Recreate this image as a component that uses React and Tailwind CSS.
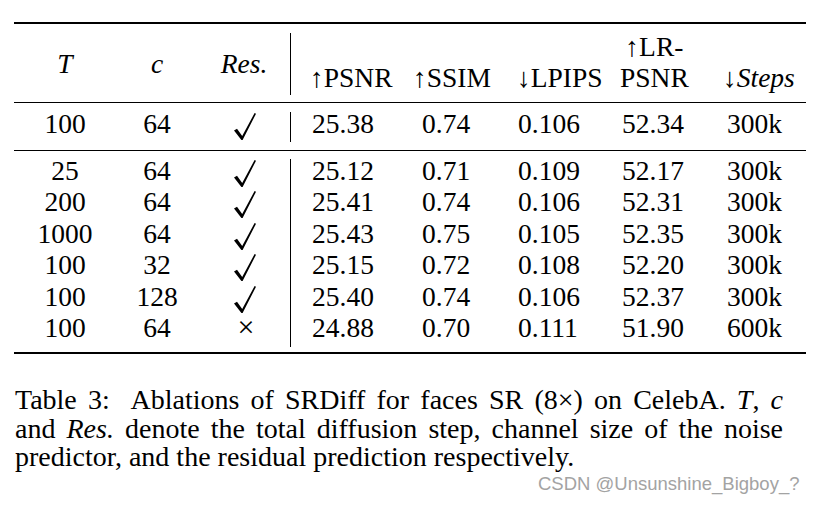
import React from 'react';

const leftCols = ['w-[102px]', 'w-[82px]', 'w-[92px]'];
const rightCols = ['w-[119px] pl-[21px]', 'w-[102px] pl-[12px]', 'w-[103px] pl-[6px]', 'w-[105px] pl-[7px]', 'w-[86px] pl-[7px]'];

const ablations = [
  ['25', '64', true, '25.12', '0.71', '0.109', '52.17', '300k'],
  ['200', '64', true, '25.41', '0.74', '0.106', '52.31', '300k'],
  ['1000', '64', true, '25.43', '0.75', '0.105', '52.35', '300k'],
  ['100', '32', true, '25.15', '0.72', '0.108', '52.20', '300k'],
  ['100', '128', true, '25.40', '0.74', '0.106', '52.37', '300k'],
  ['100', '64', false, '24.88', '0.70', '0.111', '51.90', '600k'],
];

// \surd-style check mark, shifted down so it hangs below the baseline like the TeX glyph
const Check = () => (
  <svg width="22" height="27" viewBox="0 0 22 27" className="inline-block align-baseline relative top-[7px] -mt-[8px] ml-[2px]">
    <polygon points="0,17.5 3,15.8 8.2,23 20.6,0 22,0.8 8.6,27 7.4,27" fill="#000" />
  </svg>
);

const Res = ({ ok }) => (ok ? <Check /> : <span className="text-[30px] leading-none pl-[4px]">×</span>);

const LeftRow = ({ r }) => (
  <div className="flex">
    <div className={`${leftCols[0]} text-center`}>{r[0]}</div>
    <div className={`${leftCols[1]} text-center`}>{r[1]}</div>
    <div className={`${leftCols[2]} text-center`}><Res ok={r[2]} /></div>
  </div>
);

const RightRow = ({ r }) => (
  <div className="flex">
    {r.slice(3).map((v, i) => (
      <div key={i} className={rightCols[i]}>{v}</div>
    ))}
  </div>
);

export default function App() {
  const base = ['100', '64', true, '25.38', '0.74', '0.106', '52.34', '300k'];
  return (
    <div className="w-[817px] h-[505px] bg-white relative overflow-hidden text-black [font-family:'Liberation_Serif','Times_New_Roman',serif]">
      <div className="pt-[22px] pl-[14px]">
        <div className="w-[792px] text-[27.5px]">
          <div className="h-[2px] bg-black" />

          {/* header */}
          <div className="flex h-[78px] leading-[31px]">
            <div className="flex self-center">
              <div className={`${leftCols[0]} text-center italic`}>T</div>
              <div className={`${leftCols[1]} text-center italic`}>c</div>
              <div className={`${leftCols[2]} text-center italic`}>Res.</div>
            </div>
            <div className="w-px bg-black mt-[9px] mb-[7px]" />
            <div className="flex items-end self-end pb-[9px]">
              <div className="w-[119px] pl-[19px]">↑PSNR</div>
              <div className="w-[102px] pl-[3px]">↑SSIM</div>
              <div className="w-[103px] pl-[5px]">↓LPIPS</div>
              <div className="w-[105px] pl-[5px]">
                <div className="inline-flex flex-col items-center">
                  <span>↑LR-</span>
                  <span>PSNR</span>
                </div>
              </div>
              <div className="w-[86px] pl-[3px]">↓<span className="italic">Steps</span></div>
            </div>
          </div>

          <div className="h-[1px] bg-black" />

          {/* baseline row */}
          <div className="flex leading-[31px]">
            <div className="pt-[5px] pb-[11px]">
              <LeftRow r={base} />
            </div>
            <div className="w-px bg-black mt-[9px] mb-[8px]" />
            <div className="pt-[5px] pb-[11px]">
              <RightRow r={base} />
            </div>
          </div>

          <div className="h-[1px] bg-black" />

          {/* ablation rows */}
          <div className="flex leading-[31.4px]">
            <div className="pt-[4px] pb-[9px]">
              {ablations.map((r, i) => <LeftRow key={i} r={r} />)}
            </div>
            <div className="w-px bg-black mt-[8px] mb-[5px]" />
            <div className="pt-[4px] pb-[9px]">
              {ablations.map((r, i) => <RightRow key={i} r={r} />)}
            </div>
          </div>

          <div className="h-[2px] bg-black" />
        </div>
      </div>

      <div className="ml-[15px] mt-[32px] w-[768px] text-[28px] leading-[28.5px]">
        <p className="text-justify [text-align-last:justify]">
          Table 3:&nbsp; Ablations of SRDiff for faces SR (8×) on CelebA. <span className="italic">T</span>, <span className="italic">c</span>
        </p>
        <p className="text-justify [text-align-last:justify]">
          and <span className="italic">Res.</span> denote the total diffusion step, channel size of the noise
        </p>
        <p>predictor, and the residual prediction respectively.</p>
      </div>

      <div className="absolute left-[538px] top-[472px] text-[18.5px] leading-[24px] text-[#a3a3a3] [font-family:'Liberation_Sans',Arial,sans-serif]">
        CSDN @Unsunshine_Bigboy_?
      </div>
    </div>
  );
}
